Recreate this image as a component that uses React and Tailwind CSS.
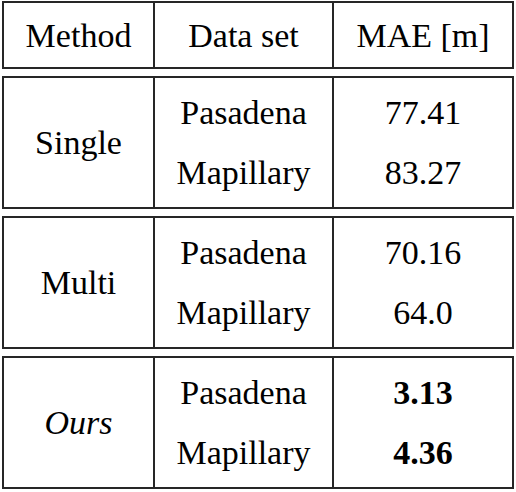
import React from 'react';

const groups = [
  {
    method: 'Single',
    rows: [
      { data: 'Pasadena', mae: '77.41' },
      { data: 'Mapillary', mae: '83.27' },
    ],
  },
  {
    method: 'Multi',
    rows: [
      { data: 'Pasadena', mae: '70.16' },
      { data: 'Mapillary', mae: '64.0' },
    ],
  },
  {
    method: 'Ours',
    ours: true,
    rows: [
      { data: 'Pasadena', mae: '3.13' },
      { data: 'Mapillary', mae: '4.36' },
    ],
  },
];

const Block = ({ children, className = '' }) => (
  <div className={`grid grid-cols-[151px_179px_1fr] border-2 border-[#262626] ${className}`}>
    {children}
  </div>
);

export default function App() {
  return (
    <div className="w-[516px] h-[492px] bg-white text-black px-[2px] pt-px flex flex-col gap-[7px] text-[34px] font-['Liberation_Serif','Times_New_Roman',serif]">
      {/* header */}
      <Block className="h-[68px]">
        <div className="flex items-center justify-center border-r-2 border-[#262626]">Method</div>
        <div className="flex items-center justify-center border-r-2 border-[#262626]">Data set</div>
        <div className="flex items-center justify-center">MAE [m]</div>
      </Block>

      {groups.map((g) => (
        <Block key={g.method} className="h-[133px]">
          <div className="flex items-center justify-center border-r-2 border-[#262626]">
            <span className={g.ours ? 'italic' : ''}>{g.method}</span>
          </div>
          <div className="flex flex-col justify-center border-r-2 border-[#262626]">
            {g.rows.map((r) => (
              <div key={r.data} className="h-[60px] flex items-center justify-center">
                {r.data}
              </div>
            ))}
          </div>
          <div className="flex flex-col justify-center">
            {g.rows.map((r) => (
              <div
                key={r.data}
                className={`h-[60px] flex items-center justify-center ${g.ours ? 'font-bold' : ''}`}
              >
                {r.mae}
              </div>
            ))}
          </div>
        </Block>
      ))}
    </div>
  );
}
